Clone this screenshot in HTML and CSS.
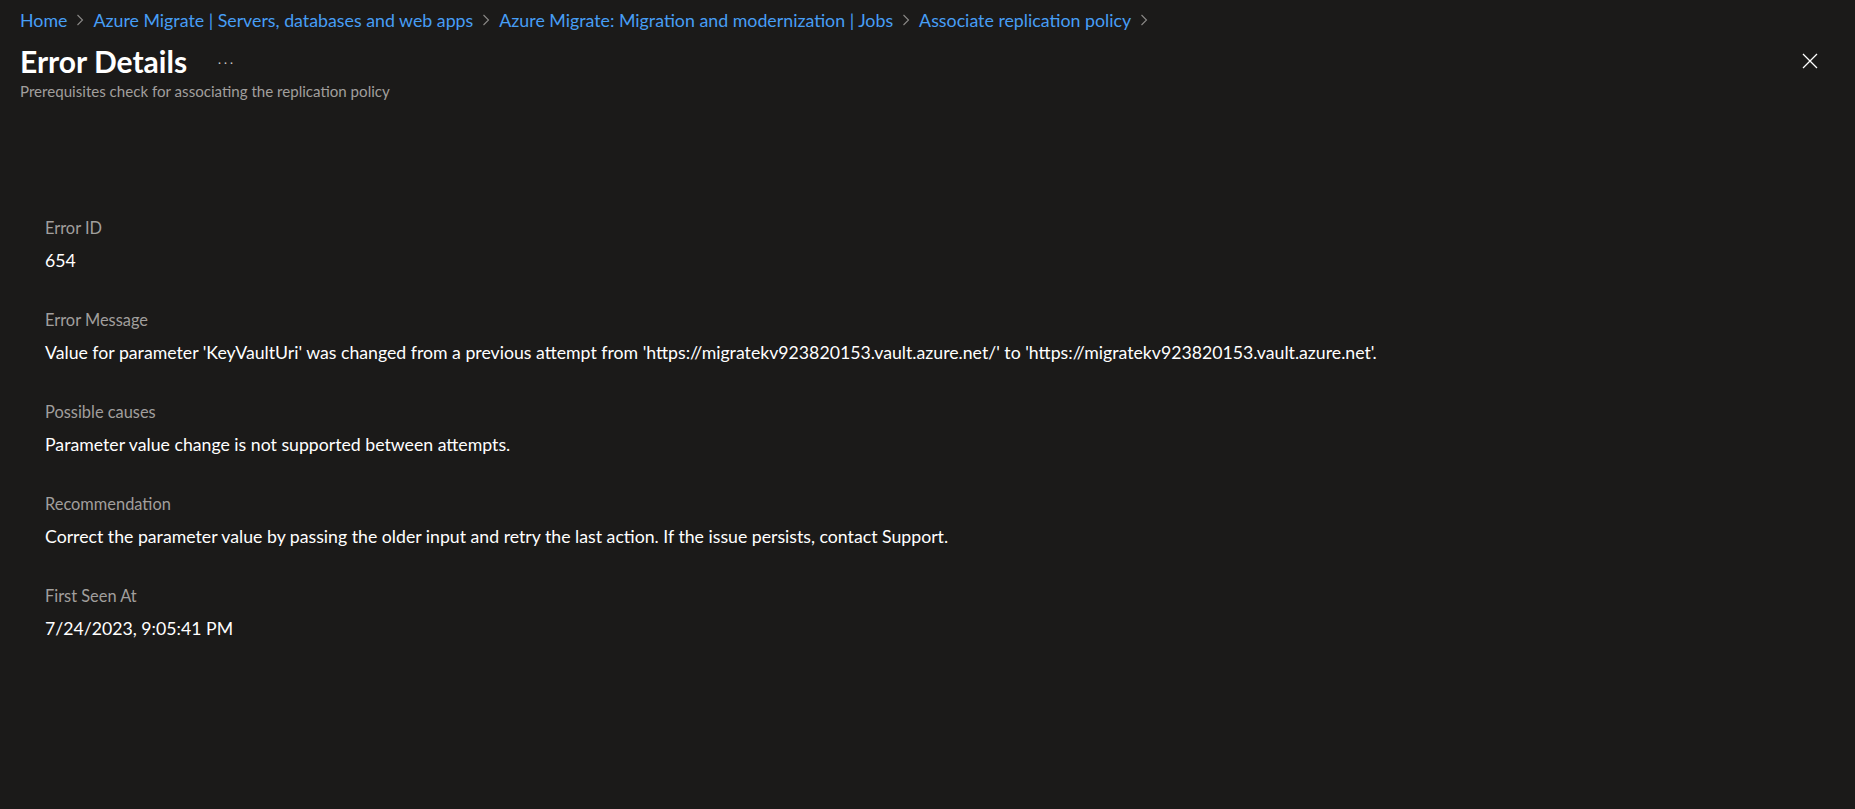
FILE: index.html
```html
<!DOCTYPE html>
<html lang="en">
<head>
    <meta charset="UTF-8">
    <meta name="viewport" content="width=device-width, initial-scale=1.0">
    <title>Error Details</title>
    <link rel="stylesheet" href="styles.css">
</head>
<body>
    <nav class="breadcrumb">
        <a href="#">Home</a>
        <svg class="sep" width="8" height="12" viewBox="0 0 8 12"><path d="M1.5 1 L6.5 6 L1.5 11" stroke="#8a8886" stroke-width="1.1" fill="none"/></svg>
        <a href="#">Azure Migrate | Servers, databases and web apps</a>
        <svg class="sep" width="8" height="12" viewBox="0 0 8 12"><path d="M1.5 1 L6.5 6 L1.5 11" stroke="#8a8886" stroke-width="1.1" fill="none"/></svg>
        <a href="#">Azure Migrate: Migration and modernization | Jobs</a>
        <svg class="sep" width="8" height="12" viewBox="0 0 8 12"><path d="M1.5 1 L6.5 6 L1.5 11" stroke="#8a8886" stroke-width="1.1" fill="none"/></svg>
        <a href="#">Associate replication policy</a>
        <svg class="sep" width="8" height="12" viewBox="0 0 8 12"><path d="M1.5 1 L6.5 6 L1.5 11" stroke="#8a8886" stroke-width="1.1" fill="none"/></svg>
    </nav>

    <header class="blade-header">
        <div class="title-row">
            <h1 class="title">Error Details</h1>
            <button class="more">&middot;&middot;&middot;</button>
            <button class="close" aria-label="Close">
                <svg width="16" height="16" viewBox="0 0 16 16">
                    <path d="M1 1 L15 15 M15 1 L1 15" stroke="#ffffff" stroke-width="1.3" fill="none"/>
                </svg>
            </button>
        </div>
        <div class="subtitle">Prerequisites check for associating the replication policy</div>
    </header>

    <main class="details">
        <div class="field">
            <div class="label">Error ID</div>
            <div class="value">654</div>
        </div>
        <div class="field">
            <div class="label">Error Message</div>
            <div class="value">Value for parameter 'KeyVaultUri' was changed from a previous attempt from 'https://migratekv923820153.vault.azure.net/' to 'https://migratekv923820153.vault.azure.net'.</div>
        </div>
        <div class="field">
            <div class="label">Possible causes</div>
            <div class="value">Parameter value change is not supported between attempts.</div>
        </div>
        <div class="field">
            <div class="label">Recommendation</div>
            <div class="value">Correct the parameter value by passing the older input and retry the last action. If the issue persists, contact Support.</div>
        </div>
        <div class="field">
            <div class="label">First Seen At</div>
            <div class="value">7/24/2023, 9:05:41 PM</div>
        </div>
    </main>
</body>
</html>
```

FILE: styles.css
```css
body {
    margin: 0;
    height: 100vh;
    background-color: #1b1a19;
    color: #ffffff;
    font-family: Lato, "Open Sans", sans-serif;
    overflow: hidden;
}

.breadcrumb {
    display: flex;
    align-items: center;
    gap: 9px;
    height: 40px;
    padding-left: 20px;
    font-size: 17.8px;
}

.breadcrumb a {
    color: #479ef5;
    text-decoration: none;
}

.blade-header {
    padding: 0 20px;
}

.title-row {
    display: flex;
    align-items: center;
    height: 42px;
}

.title {
    margin: 0;
    font-size: 30px;
    font-weight: 700;
}

.more {
    margin-left: 30px;
    background: none;
    border: none;
    color: #c8c6c4;
    font-size: 15px;
    letter-spacing: 1px;
    padding: 0;
    cursor: pointer;
}

.close {
    margin-left: auto;
    margin-right: 17px;
    background: none;
    border: none;
    padding: 0;
    display: flex;
    cursor: pointer;
}

.subtitle {
    font-size: 15.1px;
    color: #a19f9d;
}

.details {
    display: flex;
    flex-direction: column;
    gap: 38px;
    padding: 118px 45px 0;
}

.field {
    display: flex;
    flex-direction: column;
    gap: 12px;
}

.label {
    font-size: 16.4px;
    line-height: 20px;
    color: #a19f9d;
}

.value {
    font-size: 17.7px;
    line-height: 22px;
    color: #ffffff;
}
```
